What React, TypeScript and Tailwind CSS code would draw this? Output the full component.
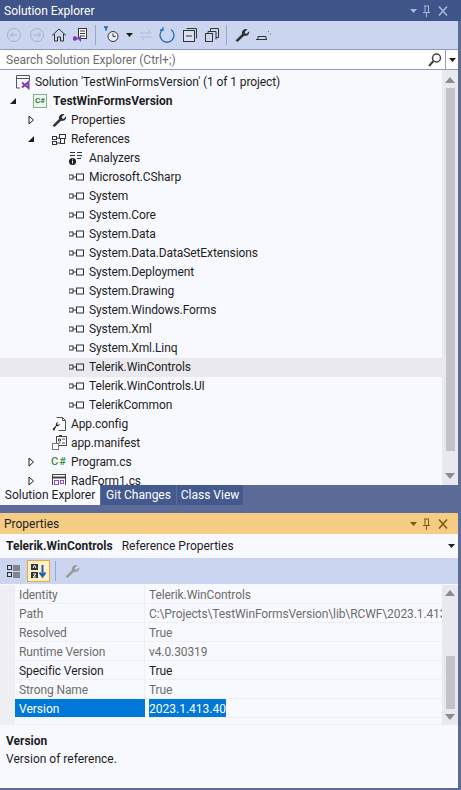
import React from 'react';

const font = "font-['Roboto','Noto_Sans',sans-serif]";

const Expanded = () => (
  <svg width="16" height="16" viewBox="0 0 16 16"><path d="M11 5v6H5z" fill="#1e1e1e" /></svg>
);
const Collapsed = () => (
  <svg width="16" height="16" viewBox="0 0 16 16"><path d="M6 4l4.500 4L6 12z" fill="#fff" stroke="#1e1e1e" /></svg>
);

const SolutionIcon = () => (
  <svg width="16" height="16" viewBox="0 0 16 16" fill="none">
    <path d="M1.500 14V1.500h13V7M1.500 4.500h13M1.500 14H5" stroke="#555" />
    <path d="M7 8.500l6.500 5.500V8l-6.500 5.500" stroke="#7b3fb5" strokeWidth="2" />
  </svg>
);
const ProjectIcon = () => (
  <div className="w-[14px] h-[14px] border border-[#7fae8a] bg-[#eef5ee] flex items-center justify-center text-[8px] leading-none font-bold text-[#2f7d3b]">C#</div>
);
const WrenchIcon = ({ color = '#333' }: { color?: string }) => (
  <svg width="16" height="16" viewBox="0 0 16 16">
    <path d="M1.500 13.500L8 7c-.6-2.200.9-5 4-5 .6 0 1 .1 1.400.3L10.800 5l.4 1.400 1.400.4 2.600-2.600c.5 3-2 5.200-5 4.600L3.500 15z" fill={color} />
  </svg>
);
const RefsIcon = () => (
  <svg width="18" height="16" viewBox="0 0 18 16" fill="none" stroke="#333">
    <rect x="1.500" y="5.500" width="4" height="3" /><rect x="1.500" y="10.500" width="4" height="3" /><rect x="8.500" y="3.500" width="6" height="4" />
    <rect x="9.500" y="7.500" width="4" height="5" /><path d="M5.500 7h3M5.500 12h4" />
  </svg>
);
const AnalyzerIcon = () => (
  <svg width="16" height="16" viewBox="0 0 16 16" fill="none">
    <path d="M1 2.500h5M8 2.500h5M1 5.500h5M8 5.500h5M8 8.500h4" stroke="#333" />
    <circle cx="3.500" cy="11.500" r="3.500" fill="#1e1e1e" />
    <path d="M3.500 10.500v3M3.500 8.800v.8" stroke="#fff" />
  </svg>
);
const AssemblyIcon = () => (
  <svg width="16" height="16" viewBox="0 0 16 16" fill="none" stroke="#333">
    <rect x="0" y="6" width="4" height="4" /><path d="M4 8h3.500" /><rect x="7.500" y="5" width="7" height="6" />
  </svg>
);
const ConfigIcon = () => (
  <svg width="16" height="16" viewBox="0 0 16 16" fill="none">
    <path d="M5.500 1.500h6l3 3v10h-7" stroke="#555" fill="#fff" />
    <path d="M11.500 1.500v3h3" stroke="#555" />
    <path d="M1.500 13l3.500-3.500c-.6-1.800.6-3.500 2.400-3.200L6 8l1 1 1.700-1.300c.2 1.800-1.500 3-3.200 2.400L3 15z" fill="#222" />
  </svg>
);
const ManifestIcon = () => (
  <svg width="18" height="16" viewBox="0 0 18 16" fill="none" stroke="#444">
    <rect x="5.500" y="1.500" width="10" height="9" fill="#fff" />
    <path d="M7.500 4h2v2h-2zM11 4h3M7.500 8h2M11 8h3" />
    <path d="M8 .5h3" />
    <rect x="1.500" y="8.500" width="6" height="6" fill="#fff" stroke="#777" />
  </svg>
);
const CsIcon = () => <span className="text-[11px] leading-none font-medium text-[#3c8c46] tracking-[1px]">C#</span>;
const FormIcon = () => (
  <svg width="16" height="16" viewBox="0 0 16 16" fill="none">
    <rect x="1.500" y="1.500" width="13" height="12" stroke="#444" />
    <path d="M1.500 4.500h13" stroke="#444" strokeWidth="2" />
    <rect x="3.500" y="7.500" width="4" height="4" stroke="#8a4fc0" />
    <rect x="9.500" y="7.500" width="3" height="3" stroke="#8a4fc0" />
  </svg>
);

type RowProps = {
  label: string;
  pad: string;
  icon: React.ReactNode;
  arrow?: 'open' | 'closed';
  bold?: boolean;
  active?: boolean;
};

const TreeRow = ({ label, pad, icon, arrow, bold, active }: RowProps) => (
  <div className={`h-[19px] pb-[2px] flex items-center relative shrink-0 ${pad} ${active ? 'bg-[#e9e9ee]' : ''}`}>
    {arrow && (
      <span className="absolute -translate-x-[28px]">
        {arrow === 'open' ? <Expanded /> : <Collapsed />}
      </span>
    )}
    <span className="w-[20px] h-[17px] flex items-center shrink-0">{icon}</span>
    <span className={`text-[12px] leading-none whitespace-nowrap text-[#1e1e1e] ${bold ? 'font-bold' : 'tracking-[-0.1px]'}`}>{label}</span>
  </div>
);

const refs = [
  'Microsoft.CSharp', 'System', 'System.Core', 'System.Data', 'System.Data.DataSetExtensions', 'System.Deployment',
  'System.Drawing', 'System.Windows.Forms', 'System.Xml', 'System.Xml.Linq', 'Telerik.WinControls', 'Telerik.WinControls.UI', 'TelerikCommon',
];

const gridRows: { name: string; value: string; dark?: boolean }[] = [
  { name: 'Identity', value: 'Telerik.WinControls' },
  { name: 'Path', value: 'C:\\Projects\\TestWinFormsVersion\\lib\\RCWF\\2023.1.413.' },
  { name: 'Resolved', value: 'True' },
  { name: 'Runtime Version', value: 'v4.0.30319' },
  { name: 'Specific Version', value: 'True', dark: true },
  { name: 'Strong Name', value: 'True' },
];

const ScrollArrow = ({ up }: { up?: boolean }) => (
  <svg width="10" height="6" viewBox="0 0 10 6" className={`shrink-0 ${up ? '' : 'rotate-180'}`}>
    <path d="M5 0l5 6H0z" fill="#8b8b98" />
  </svg>
);

const TitleControls = ({ color }: { color: string }) => (
  <svg width="42" height="14" viewBox="0 0 42 14" fill="none" stroke={color}>
    <path d="M0 5h7l-3.500 4z" fill={color} stroke="none" />
    <path d="M14 2h5M15 2v6M18.500 2v6M13 8.500h7M16.500 9v4" />
    <path d="M29 2.500l8 9M37 2.500l-8 9" strokeWidth="1.600" />
  </svg>
);

export default function App() {
  return (
    <div className={`w-[461px] h-[790px] bg-[#5d6b99] flex flex-col overflow-hidden ${font}`}>
      <div className="h-[21px] bg-[#3f5488] flex items-center justify-between pl-[4px] pr-[9px] shrink-0">
        <span className="text-[12px] text-white leading-none">Solution Explorer</span>
        <TitleControls color="#a9b6d6" />
      </div>

      <div className="mr-[3px] flex-1 flex flex-col min-h-0">
        <div className="h-[28px] bg-[#ccd5f0] flex items-center pl-[6px] shrink-0">
          <svg width="16" height="16" viewBox="0 0 16 16" fill="none" stroke="#a8b0c8"><circle cx="8" cy="8" r="6.500" /><path d="M11.500 8h-7M7 5.500L4.500 8 7 10.500" /></svg>
          <svg width="16" height="16" viewBox="0 0 16 16" fill="none" stroke="#a8b0c8" className="ml-[7px]"><circle cx="8" cy="8" r="6.500" /><path d="M4.500 8h7M9 5.500L11.500 8 9 10.500" /></svg>
          <svg width="16" height="16" viewBox="0 0 16 16" fill="none" stroke="#333" className="ml-[6px]"><path d="M1 8.500L8 2l7 6.500M3.500 7v7h3v-4h3v4h3V7" /></svg>
          <svg width="16" height="16" viewBox="0 0 16 16" fill="none" className="ml-[5px]">
            <rect x="6.500" y="1.500" width="8" height="10" stroke="#333" fill="#fff" />
            <path d="M8 4h5M8 6.500h5M8 9h5" stroke="#333" />
            <path d="M1 10l2-1 3 2 3-3v7l-3-3-3 2-2-1z" fill="#7b3fb5" />
          </svg>
          <div className="w-px h-[20px] bg-[#9aa7c7] ml-[7px]" />
          <svg width="18" height="18" viewBox="0 0 18 18" fill="none" className="ml-[7px]">
            <path d="M1 1h4M3 1v3.500" stroke="#1f5fa8" strokeWidth="1.500" />
            <circle cx="10" cy="10.500" r="5" fill="#e8ecf6" stroke="#333" />
            <path d="M10 7.500v3h2.500" stroke="#333" />
          </svg>
          <svg width="7" height="4" viewBox="0 0 7 4" className="ml-[5px]"><path d="M0 0h7L3.500 4z" fill="#1e1e1e" /></svg>
          <svg width="14" height="12" viewBox="0 0 14 12" fill="none" stroke="#b0b8d0" className="ml-[6px]"><path d="M1 4h11M9 1l3 3M13 8H2M5 11L2 8" /></svg>
          <svg width="16" height="18" viewBox="0 0 16 18" fill="none" stroke="#1f6fb8" strokeWidth="1.300" className="ml-[6px]"><path d="M4 3.500A7 7 0 1 0 12 3.500M4 1v3H1" /></svg>
          <svg width="16" height="16" viewBox="0 0 16 16" fill="none" stroke="#333" className="ml-[7px]"><path d="M4.500 1.500h10v10" /><rect x="1.500" y="3.500" width="11" height="11" fill="#dbe1f3" /><path d="M4 9h6" /></svg>
          <svg width="16" height="16" viewBox="0 0 16 16" fill="none" stroke="#333" className="ml-[6px]"><path d="M6.500 4V1.500h8v9H12" /><path d="M4 7V4.500h8v8" /><rect x="1.500" y="6.500" width="7" height="8" /></svg>
          <div className="w-px h-[20px] bg-[#9aa7c7] ml-[6px]" />
          <span className="ml-[7px]"><WrenchIcon /></span>
          <svg width="17" height="12" viewBox="0 0 17 12" fill="none" stroke="#333" className="ml-[5px]"><path d="M1 10.500h11M3 10.500V7.500h8v3" /><path d="M13 2l1 1M15 5h1M12.500 5h.1" stroke="#777" /></svg>
        </div>

        <div className="h-[21px] bg-white border-y border-[#8e9bbc] flex items-center justify-between shrink-0">
          <span className="text-[12px] leading-none text-[#6d6d6d] pl-[6px]">Search Solution Explorer (Ctrl+;)</span>
          <div className="flex items-center h-full">
            <svg width="16" height="16" viewBox="0 0 16 16" fill="none" stroke="#444" className="mr-[2px]"><circle cx="9.500" cy="6" r="4" strokeWidth="1.500" /><path d="M6.500 9l-4.500 5" strokeWidth="2" /></svg>
            <div className="w-[13px] h-full border-l border-[#8e9bbc] flex items-center justify-center">
              <svg width="7" height="4" viewBox="0 0 7 4"><path d="M0 0h7L3.500 4z" fill="#1e1e1e" /></svg>
            </div>
          </div>
        </div>

        <div className="h-[415px] bg-[#f8f9fe] flex shrink-0">
          <div className="flex-1 flex flex-col pt-[3px] overflow-hidden">
            <TreeRow label="Solution 'TestWinFormsVersion' (1 of 1 project)" pad="pl-[15px]" icon={<SolutionIcon />} />
            <TreeRow label="TestWinFormsVersion" pad="pl-[33px]" icon={<ProjectIcon />} arrow="open" bold />
            <TreeRow label="Properties" pad="pl-[51px]" icon={<WrenchIcon />} arrow="closed" />
            <TreeRow label="References" pad="pl-[51px]" icon={<RefsIcon />} arrow="open" />
            <TreeRow label="Analyzers" pad="pl-[69px]" icon={<AnalyzerIcon />} />
            {refs.map((r) => (
              <TreeRow key={r} label={r} pad="pl-[69px]" icon={<AssemblyIcon />} active={r === 'Telerik.WinControls'} />
            ))}
            <TreeRow label="App.config" pad="pl-[51px]" icon={<ConfigIcon />} />
            <TreeRow label="app.manifest" pad="pl-[51px]" icon={<ManifestIcon />} />
            <TreeRow label="Program.cs" pad="pl-[51px]" icon={<CsIcon />} arrow="closed" />
            <TreeRow label="RadForm1.cs" pad="pl-[51px]" icon={<FormIcon />} arrow="closed" />
          </div>
          <div className="w-[16px] bg-[#e8e8ef] flex flex-col items-center pt-[7px] pb-[6px]">
            <ScrollArrow up />
            <div className="w-[9px] h-[363px] bg-[#c2c3c9] mt-[5px]" />
            <div className="mt-auto flex"><ScrollArrow /></div>
          </div>
        </div>

        <div className="h-[20px] flex items-stretch shrink-0 text-[12px] leading-none">
          <div className="w-[100px] bg-[#f8f9fe] text-[#1e1e1e] flex items-center justify-center">Solution Explorer</div>
          <div className="w-[75px] ml-px bg-[#445a8e] text-white flex items-center justify-center">Git Changes</div>
          <div className="w-[66px] ml-px bg-[#445a8e] text-white flex items-center justify-center">Class View</div>
        </div>

        <div className="h-[8px] shrink-0" />

        <div className="h-[21px] bg-[#f5cc84] flex items-center justify-between pl-[4px] pr-[6px] shrink-0">
          <span className="text-[12px] leading-none text-[#1e1e1e]">Properties</span>
          <TitleControls color="#7a5a14" />
        </div>

        <div className="flex-1 bg-[#f8f9fe] flex flex-col min-h-0">
          <div className="h-[24px] flex items-center justify-between pl-[6px] pr-[3px] shrink-0 text-[12px] leading-none text-[#1e1e1e]">
            <span className="whitespace-nowrap"><span className="font-bold">Telerik.WinControls</span><span className="ml-[9px]">Reference Properties</span></span>
            <svg width="7" height="4" viewBox="0 0 7 4"><path d="M0 0h7L3.500 4z" fill="#1e1e1e" /></svg>
          </div>

          <div className="h-[26px] bg-[#ccd5f0] flex items-center pl-[6px] gap-[5px] shrink-0">
            <svg width="16" height="16" viewBox="0 0 16 16" fill="none" stroke="#333">
              <rect x="1.500" y="2.500" width="4" height="4" /><rect x="1.500" y="9.500" width="4" height="4" /><path d="M7 3h7M7 5h7M7 7h7M7 10h7M7 12h7M7 14h7" />
            </svg>
            <div className="w-[23px] h-[22px] bg-[#fdf0cc] border border-[#e5a93a] flex items-center justify-center">
              <svg width="17" height="16" viewBox="0 0 17 16">
                <rect x="1" y="1" width="7" height="6" fill="#333" />
                <rect x="1" y="9" width="7" height="6" fill="#333" />
                <path d="M3 5l1.500-3L6 5M3 11h3L3 14h3" stroke="#fff" fill="none" />
                <path d="M12.500 2v11M9.500 9.500l3 4 3-4" stroke="#1f5fa8" strokeWidth="2" fill="none" />
              </svg>
            </div>
            <div className="w-px h-[20px] bg-[#9aa7c7]" />
            <span className="ml-[3px]"><WrenchIcon color="#9a9a9f" /></span>
          </div>

          <div className="flex mt-[1px] h-[140px] shrink-0">
            <div className="flex-1 flex min-w-0 border-b border-[#eeeef3]">
              <div className="w-[15px] bg-[#eeeef3] shrink-0" />
              <div className="flex-1 flex flex-col min-w-0 overflow-hidden">
                {gridRows.map((row) => (
                  <div key={row.name} className="h-[19px] shrink-0 flex border-b border-[#eeeef3] text-[12px] leading-none tracking-[-0.1px]">
                    <div className={`w-[130px] border-r border-[#eeeef3] pl-[4px] pt-px flex items-center shrink-0 ${row.dark ? 'text-[#1e1e1e]' : 'text-[#6d6d6d]'}`}>{row.name}</div>
                    <div className={`pl-[4px] pt-px flex items-center whitespace-nowrap ${row.dark ? 'text-[#1e1e1e]' : 'text-[#6d6d6d]'}`}>{row.value}</div>
                  </div>
                ))}
                <div className="h-[19px] shrink-0 flex text-[12px] leading-none border-b border-[#eeeef3]">
                  <div className="w-[130px] h-[18px] bg-[#0078d7] text-white pl-[4px] pt-px flex items-center">Version</div>
                  <div className="pl-[4px] flex items-center">
                    <span className="bg-[#0078d7] text-white h-[18px] pt-px flex items-center">2023.1.413.40</span>
                  </div>
                </div>
              </div>
            </div>
            <div className="w-[16px] bg-[#e8e8ef] flex flex-col items-center py-[5px] shrink-0">
              <ScrollArrow up />
              <div className="w-[9px] h-[53px] bg-[#c2c3c9] mt-auto mb-[5px]" />
              <ScrollArrow />
            </div>
          </div>

          <div className="pl-[6px] pt-[7px] text-[12px] leading-none text-[#1e1e1e]">
            <div className="font-bold h-[18px] flex items-center">Version</div>
            <div className="h-[18px] flex items-center">Version of reference.</div>
          </div>
        </div>
        <div className="h-[2px] shrink-0" />
      </div>
    </div>
  );
}
